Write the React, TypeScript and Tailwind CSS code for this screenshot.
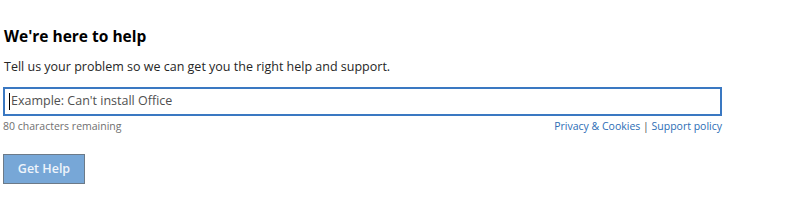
export default function App() {
  return (
    <div className="w-[800px] h-[206px] bg-white font-['Open_Sans',sans-serif] text-[#1b1b1b]">
      <div className="pl-[3px] pt-[25px] w-[722px]">
        <h2 className="pl-px text-[15.5px] leading-[22px] font-bold text-black">We&apos;re here to help</h2>
        <p className="pl-px mt-[11px] text-[12.5px] leading-[18px] text-[#262626]">
          Tell us your problem so we can get you the right help and support.
        </p>
        <div className="mt-[11px] h-[29px] border-2 border-[#3a78c2] flex items-center gap-px pl-[4px] pr-[3px]">
          <span className="w-px h-[17px] bg-black" />
          <span className="text-[12.5px] text-[#505050]">Example: Can&apos;t install Office</span>
        </div>
        <div className="mt-[3px] flex justify-between text-[10.5px] leading-[15px]">
          <span className="text-[#707070]">80 characters remaining</span>
          <span className="text-[#2c6db5]">
            Privacy &amp; Cookies <span className="text-[#505050]">|</span> Support policy
          </span>
        </div>
        <button className="mt-[20px] w-[82px] h-[30px] bg-[#77a7d7] border border-[#6c7a88] text-[#eef4fb] text-[12.5px] font-semibold">
          Get Help
        </button>
      </div>
    </div>
  );
}
